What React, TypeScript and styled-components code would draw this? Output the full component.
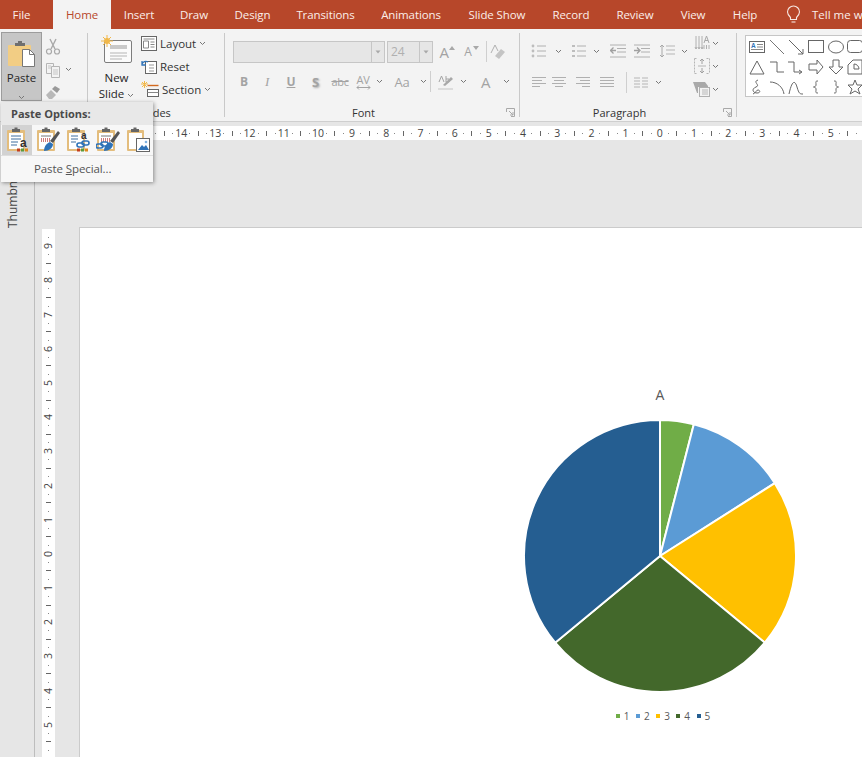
import styled, { createGlobalStyle } from "styled-components";
import { ReactNode } from "react";

const GlobalStyle = createGlobalStyle`
    html, body {
        margin: 0;
        height: 100%;
        overflow: hidden;
        background: #e6e6e6;
    }
    * {
        box-sizing: border-box;
    }
`;

const UI_FONT = `"Open Sans", "Noto Sans", "Liberation Sans", sans-serif`;
const GREY = "#8c8c8c";

const Page = styled.div`
    position: relative;
    width: 862px;
    height: 757px;
    overflow: hidden;
    display: flex;
    flex-direction: column;
    font-family: ${UI_FONT};
    font-size: 11.5px;
    color: #333;
`;

const TabBar = styled.div`
    display: flex;
    align-items: stretch;
    height: 29px;
    background: #b7472a;
    flex: none;
    overflow: hidden;
`;

const Tab = styled.div<{ $w: number; $active?: boolean }>`
    width: ${(p) => p.$w}px;
    flex: none;
    display: flex;
    align-items: center;
    justify-content: center;
    letter-spacing: -0.1px;
    background: ${(p) => (p.$active ? "#f3f3f3" : "transparent")};
    color: ${(p) => (p.$active ? "#b7472a" : "#fbeee9")};
`;

const TellMe = styled.div`
    display: flex;
    flex: none;
    align-items: center;
    gap: 11px;
    margin-left: 15px;
    color: #fbeee9;
    white-space: nowrap;
`;

const Ribbon = styled.div`
    display: flex;
    height: 93px;
    flex: none;
    background: #f3f3f3;
    border-bottom: 1px solid #cfcfcf;
    overflow: hidden;
`;

const Group = styled.div<{ $w: number; $line?: boolean }>`
    width: ${(p) => p.$w}px;
    flex: none;
    display: flex;
    flex-direction: column;
    margin: 4px 0;
    border-right: ${(p) => (p.$line ? "1px solid #c9c9c9" : "none")};
`;

const GroupBody = styled.div`
    flex: 1;
    display: flex;
    min-height: 0;
`;

const GroupFooter = styled.div<{ $flush?: boolean }>`
    height: 17px;
    margin-bottom: -4px;
    padding-right: ${(p) => (p.$flush ? 0 : 17)}px;
    display: grid;
    grid-template-columns: 1fr auto 1fr;
    align-items: center;
    color: #333;
    font-size: 11px;
`;

const FooterLabel = styled.span`
    grid-column: 2;
`;

const Launcher = styled.svg`
    grid-column: 3;
    justify-self: end;
    margin-right: -13px;
    width: 9px;
    height: 9px;
`;

const PasteButton = styled.div`
    width: 41px;
    height: 69px;
    margin: -1px 0 0 1px;
    background: #c6c6c6;
    border: 1px solid #9c9c9c;
    display: flex;
    flex-direction: column;
    align-items: center;
    padding-top: 7px;
    color: #262626;
    line-height: 14px;
`;

const PasteLine = styled.span`
    margin-top: 4px;
`;

const SmallColumn = styled.div`
    display: flex;
    flex-direction: column;
    gap: 6px;
    padding: 5px 0 0 3px;
`;

const SmallRow = styled.div`
    display: flex;
    align-items: center;
    gap: 4px;
    height: 17px;
`;

const BigButton = styled.div`
    width: 49px;
    margin-left: 4px;
    display: flex;
    flex-direction: column;
    align-items: center;
    line-height: 16px;
    padding-top: 2px;
    color: #262626;
`;

const BigLabel = styled.span`
    margin-top: 6px;
`;

const SlideActions = styled.div`
    display: flex;
    flex-direction: column;
    gap: 6px;
    padding-top: 2px;
`;

const SlideAction = styled.div`
    display: flex;
    align-items: center;
    gap: 3px;
    height: 17px;
    color: #333;
`;

const Chevron = () => (
    <svg width="7" height="5" viewBox="0 0 7 5" style={{ flex: "none" }}>
        <path d="M1 1l2.5 2.5L6 1" fill="none" stroke="#777" strokeWidth="1" />
    </svg>
);

const FontColumn = styled.div`
    display: flex;
    flex-direction: column;
    padding: 8px 0 0 8px;
    gap: 9px;
`;

const FontRow = styled.div`
    display: flex;
    align-items: center;
    height: 21px;
`;

const Combo = styled.div<{ $w: number }>`
    width: ${(p) => p.$w}px;
    height: 22px;
    margin-right: 2px;
    display: flex;
    align-items: center;
    justify-content: flex-end;
    background: #e6e6e6;
    border: 1px solid #c6c6c6;
    color: #b0b0b0;
`;

const ComboValue = styled.span`
    flex: 1;
    padding-left: 3px;
    font-size: 12px;
`;

const ComboArrow = styled.div`
    width: 13px;
    height: 100%;
    border-left: 1px solid #c6c6c6;
    display: flex;
    align-items: center;
    justify-content: center;
`;

const Caret = () => (
    <svg width="6" height="4" viewBox="0 0 6 4">
        <path d="M0.5 0.5h5L3 3.5z" fill="#a8a8a8" />
    </svg>
);

const Glyph = styled.div<{ $w: number; $size?: number; $bold?: boolean; $italic?: boolean; $under?: boolean; $shadow?: boolean }>`
    width: ${(p) => p.$w}px;
    flex: none;
    text-align: center;
    color: #a3a3a3;
    font-size: ${(p) => p.$size ?? 12}px;
    line-height: 18px;
    font-family: ${(p) => (p.$italic ? `"Liberation Serif", serif` : UI_FONT)};
    font-weight: ${(p) => (p.$bold ? 700 : 400)};
    font-style: ${(p) => (p.$italic ? "italic" : "normal")};
    text-decoration: ${(p) => (p.$under ? "underline" : "none")};
    text-shadow: ${(p) => (p.$shadow ? "1px 1px 2px #aaa" : "none")};
    letter-spacing: -0.3px;
`;

const SpacingGlyph = styled(Glyph)`
    display: flex;
    flex-direction: column;
    align-items: center;
    line-height: 11px;
`;

const Cell = styled.div<{ $w: number }>`
    width: ${(p) => p.$w}px;
    flex: none;
    display: flex;
    align-items: center;
    justify-content: center;
`;

const VLine = styled.div<{ $mx: number }>`
    width: 1px;
    height: 21px;
    margin: 0 ${(p) => p.$mx}px;
    flex: none;
    background: #cfcfcf;
`;

const ParaLeft = styled.div`
    width: 172px;
    flex: none;
    display: flex;
    flex-direction: column;
    gap: 13px;
    padding: 9px 0 0 11px;
`;

const ParaRight = styled.div`
    display: flex;
    flex-direction: column;
    gap: 5px;
    padding-top: 1px;
`;

const ParaRow = styled.div`
    display: flex;
    align-items: center;
    height: 18px;
`;

const ShapesBox = styled.div`
    margin: 2px 0 0 8px;
    width: 130px;
    height: 62px;
    padding: 1px 0 0 1px;
    background: #fff;
    border: 1px solid #c6c6c6;
    display: grid;
    grid-template-columns: repeat(6, 19.7px);
    grid-auto-rows: 20px;
    align-items: center;
    justify-items: center;
`;

const Workspace = styled.div`
    flex: 1;
    display: flex;
    min-height: 0;
`;

const ThumbPane = styled.div`
    width: 35px;
    flex: none;
    border-right: 1px solid #bdbdbd;
    padding: 44px 0 0 5px;
`;

const ThumbLabel = styled.div`
    writing-mode: vertical-rl;
    transform: rotate(180deg);
    height: 62px;
    white-space: nowrap;
    font-size: 12px;
    line-height: 16px;
    color: #444;
`;

const EditArea = styled.div`
    flex: 1;
    min-width: 0;
    display: flex;
    flex-direction: column;
`;

const HRuler = styled.div`
    height: 14px;
    margin: 4px 0 0 45px;
    padding-left: 62.7px;
    background: #fff;
    display: flex;
    align-items: center;
    overflow: hidden;
    flex: none;
`;

const RulerCell = styled.div`
    width: 8.55px;
    height: 14px;
    flex: none;
    display: flex;
    align-items: center;
    justify-content: center;
    font-size: 10.5px;
    color: #444;
`;

const RulerUnit = styled.div`
    display: contents;
`;

const VRulerStrip = styled.div`
    width: 13px;
    flex: none;
    margin-top: 2px;
    padding-top: 4.4px;
    background: #fff;
    display: flex;
    flex-direction: column;
    align-items: center;
    height: 529px;
    overflow: hidden;
`;

const VRulerCell = styled.div`
    width: 13px;
    height: 8.55px;
    flex: none;
    display: flex;
    align-items: center;
    justify-content: center;
    font-size: 10.5px;
    color: #444;
`;

const VNumber = styled.span`
    display: block;
    transform: rotate(-90deg);
`;

const Dot = styled.span`
    width: 1px;
    height: 1px;
    background: #888;
`;

const HTick = styled.span`
    width: 1px;
    height: 5px;
    background: #666;
`;

const VTick = styled.span`
    width: 5px;
    height: 1px;
    background: #666;
`;

const CanvasRow = styled.div`
    flex: 1;
    display: flex;
    gap: 24px;
    padding: 87px 0 0 7px;
    min-height: 0;
`;

const Slide = styled.div`
    flex: 1;
    height: 600px;
    background: #fff;
    border: 1px solid #cbcbcb;
    border-right: none;
    padding: 159px 0 0 430px;
`;

const ChartBlock = styled.div`
    width: 300px;
    display: flex;
    flex-direction: column;
    align-items: center;
`;

const ChartTitle = styled.div`
    font-size: 14px;
    line-height: 16px;
    color: #595959;
    margin-bottom: 15px;
`;

const Legend = styled.div`
    display: flex;
    gap: 6.5px;
    margin: 16px 0 0 6px;
    font-size: 10px;
    line-height: 12px;
    color: #595959;
`;

const LegendItem = styled.div`
    display: flex;
    align-items: center;
    gap: 4px;
`;

const Swatch = styled.span<{ $c: string }>`
    width: 4px;
    height: 4px;
    background: ${(p) => p.$c};
`;

const PastePopup = styled.div`
    position: absolute;
    left: 1px;
    top: 102px;
    width: 152px;
    height: 80px;
    background: #f7f7f7;
    box-shadow: 1px 1px 4px rgba(0, 0, 0, 0.4);
    display: flex;
    flex-direction: column;
`;

const PopupHeader = styled.div`
    height: 23px;
    background: #e8e8e8;
    padding: 4px 0 0 10px;
    font-weight: 700;
    font-size: 11px;
    color: #4a4a4a;
`;

const PopupIcons = styled.div`
    height: 31px;
    display: flex;
    padding-left: 1px;
    border-bottom: 1px solid #dedede;
`;

const PopupIcon = styled.div<{ $on?: boolean }>`
    width: 30px;
    height: 30px;
    display: flex;
    align-items: center;
    justify-content: center;
    padding-left: 2px;
    background: ${(p) => (p.$on ? "#d2d2d2" : "transparent")};
`;

const PopupLink = styled.div`
    flex: 1;
    display: flex;
    align-items: center;
    padding: 0 0 2px 33px;
    color: #555;
    letter-spacing: -0.1px;
`;

/* ---------- ribbon drawings ---------- */

const Svg = ({ w, h, children }: { w: number; h: number; children: ReactNode }) => (
    <svg width={w} height={h} viewBox={`0 0 ${w} ${h}`} fill="none" stroke={GREY} strokeWidth="1" style={{ flex: "none", display: "block" }}>
        {children}
    </svg>
);

const PasteIcon = () => (
    <Svg w={29} h={27}>
        <rect x="1" y="5" width="23" height="21" rx="1" fill="#f2cd84" stroke="none" />
        <path d="M8 5V3h3V1h4v2h3v3H8z" fill="#6f6f6f" stroke="none" />
        <path d="M15.5 9.5h7l5 5v12h-12z" fill="#fff" stroke="#777" />
        <path d="M22.5 9.5v5h5" stroke="#777" />
    </Svg>
);

const CutIcon = () => (
    <Svg w={16} h={17}>
        <path d="M5 1l5 10M11 1L6 11" stroke="#a8a8a8" strokeWidth="1.4" />
        <circle cx="4" cy="13.5" r="2.5" stroke="#a8a8a8" strokeWidth="1.2" />
        <circle cx="12" cy="13.5" r="2.5" stroke="#a8a8a8" strokeWidth="1.2" />
    </Svg>
);

const CopyIcon = () => (
    <Svg w={16} h={16}>
        <path d="M1.5 1.5h7v10h-7z" stroke="#b5b5b5" />
        <path d="M6.5 4.5h8v11h-8z" fill="#f3f3f3" stroke="#b5b5b5" />
        <path d="M8 8h5M8 10h5M8 12h5M3 4h3M3 6h3" stroke="#c5c5c5" />
    </Svg>
);

const PainterIcon = () => (
    <Svg w={16} h={15}>
        <path d="M1 10l5-5 5 5-4 4H4z" fill="#b8b8b8" stroke="none" />
        <path d="M7 4l3-3 5 3-3 4z" fill="#9a9a9a" stroke="none" />
    </Svg>
);

const NewSlideIcon = () => (
    <Svg w={31} h={29}>
        <rect x="3.5" y="5.5" width="27" height="22" rx="1.5" fill="#fbfbfb" stroke="#7d7d7d" />
        <path d="M9 10h17v4H9z" fill="#c9c9c9" stroke="none" />
        <path d="M9 18h17M9 21h17M9 24h12" stroke="#b5b5b5" />
        <circle cx="6" cy="6" r="3" fill="#f1b84a" stroke="none" />
        <path d="M6 0v12M0 6h12M2 2l8 8M10 2l-8 8" stroke="#f1b84a" />
    </Svg>
);

const LayoutIcon = () => (
    <Svg w={16} h={15}>
        <rect x="0.5" y="0.5" width="15" height="14" fill="#fff" stroke="#666" />
        <path d="M2.5 3h11M2.5 5v7h5V5zM9.5 6h4M9.5 8.5h4M9.5 11h4" stroke="#888" />
    </Svg>
);

const ResetIcon = () => (
    <Svg w={16} h={15}>
        <rect x="4.5" y="2.5" width="11" height="12" fill="#fff" stroke="#666" />
        <path d="M8 6h5M8 9h5M8 12h5" stroke="#999" />
        <path d="M1 5a4 4 0 0 1 6-2M1 2v4h4" stroke="#2f73b8" strokeWidth="1.3" />
    </Svg>
);

const SectionIcon = () => (
    <Svg w={18} h={17}>
        <path d="M0 3h7M3.5 0v7M1 1l5 5M6 1L1 6" stroke="#f1b84a" />
        <path d="M6.5 4.5h11" stroke="#d2691e" strokeWidth="1.4" />
        <rect x="6.5" y="8.5" width="11" height="7" fill="#fff" stroke="#666" />
        <path d="M6.5 11.5h11" stroke="#888" />
    </Svg>
);

const GrowA = ({ down }: { down?: boolean }) => (
    <Cell $w={24}>
        <Glyph $w={10} $size={down ? 12 : 15}>A</Glyph>
        <svg width="6" height="4" viewBox="0 0 6 4" style={{ marginTop: -8 }}>
            <path d={down ? "M0 0h6L3 4z" : "M3 0l3 4H0z"} fill="#a8a8a8" />
        </svg>
    </Cell>
);

const ClearIcon = () => (
    <Svg w={16} h={16}>
        <path d="M1 9L5 1l3 6" stroke="#b0b0b0" />
        <path d="M5 12l6-7 4 3-6 7z" fill="#c4c4c4" stroke="none" />
    </Svg>
);

const HighlightIcon = () => (
    <Svg w={16} h={16}>
        <path d="M1 8l2.5-6L6 8" stroke="#a3a3a3" />
        <path d="M8 2v6h3a2 2 0 0 0 0-3H8" stroke="#a3a3a3" />
        <path d="M5 11l8-8 2 2-8 7z" fill="#a8a8a8" stroke="none" />
        <path d="M0 14h15v2H0z" fill="#dcdcdc" stroke="none" />
    </Svg>
);

const Lines = ({ rows }: { rows: [number, number][] }) => (
    <Svg w={15} h={12}>
        {rows.map(([x, w], i) => (
            <path key={i} d={`M${x} ${i * 3 + 1.5}h${w}`} stroke="#b0b0b0" />
        ))}
    </Svg>
);

const BulletIcon = ({ numbered }: { numbered?: boolean }) => (
    <Svg w={15} h={15}>
        {[2, 7, 12].map((y) => (
            <g key={y}>
                {numbered ? <path d={`M1 ${y - 1}h3v2H1z`} fill="#bdbdbd" stroke="none" /> : <circle cx="2" cy={y} r="1.4" fill="#bdbdbd" stroke="none" />}
                <path d={`M6 ${y}h9`} stroke="#b0b0b0" />
            </g>
        ))}
    </Svg>
);

const IndentIcon = ({ out }: { out?: boolean }) => (
    <Svg w={16} h={14}>
        <path d="M0 1h16M7 4.5h9M7 8h9M0 13h16" stroke="#b0b0b0" />
        <path d={out ? "M6 6.5H1M3.5 3.5l-3 3 3 3" : "M0 6.5h5M3 3.5l3 3-3 3"} stroke="#a0a0a0" strokeWidth="1.3" />
    </Svg>
);

const SpacingIcon = () => (
    <Svg w={16} h={16}>
        <path d="M3 2v12M1 4l2-2 2 2M1 12l2 2 2-2" stroke="#a8a8a8" />
        <path d="M7 3h9M7 7h9M7 11h9" stroke="#b5b5b5" />
    </Svg>
);

const DirectionIcon = () => (
    <Svg w={16} h={16}>
        <path d="M2 1v13M5 1v13M8 1v13M1 12l1 2 1-2M4 12l1 2 1-2M7 12l1 2 1-2" stroke="#b0b0b0" />
        <path d="M10 8l2.5-7L15 8M11 5.5h3" stroke="#a8a8a8" />
        <path d="M10 10v4M12.5 10v4M15 10v4" stroke="#b0b0b0" />
    </Svg>
);

const AlignTextIcon = () => (
    <Svg w={16} h={16}>
        <path d="M0.5 0.5h3M12.5 0.5h3M0.5 0.5v15M15.5 0.5v15M0.5 15.5h3M12.5 15.5h3" stroke="#b5b5b5" strokeDasharray="2 1" />
        <path d="M8 1v5M6 3l2-2 2 2M8 15v-5M6 13l2 2 2-2" stroke="#a0a0a0" />
        <path d="M4 8h8" stroke="#b5b5b5" />
    </Svg>
);

const SmartArtIcon = () => (
    <Svg w={17} h={16}>
        <path d="M0 1h12l3 4v1H5v6H4z" fill="#a9a9a9" stroke="none" />
        <rect x="6.5" y="6.5" width="10" height="9" fill="#f3f3f3" stroke="#b0b0b0" />
        <path d="M9 9h6M9 11h6M9 13h6" stroke="#b8b8b8" />
    </Svg>
);

const ColumnsIcon = () => (
    <Svg w={14} h={11}>
        <path d="M0 1h6M8 1h6M0 4h6M8 4h6M0 7h6M8 7h6M0 10h6M8 10h6" stroke="#b5b5b5" />
    </Svg>
);

const LauncherIcon = () => (
    <Launcher viewBox="0 0 9 9" fill="none" stroke="#a8a8a8">
        <path d="M0.5 4V0.5h8v8H5M3 3l4 4M7 4v3H4" />
    </Launcher>
);

const shapes: ReactNode[] = [
    <g key="tb">
        <rect x="0.5" y="2.5" width="15" height="11" fill="#fff" stroke="#666" />
        <path d="M8 5.5h6M8 8h6M2 10.5h12" stroke="#888" />
        <text x="2" y="9" fontSize="6.5" fill="#2f73b8" stroke="none" fontFamily="Liberation Sans, sans-serif" fontWeight="700">A</text>
    </g>,
    <path key="l" d="M1 1l14 14" stroke="#777" />,
    <path key="a" d="M1 1l14 14M15 10v5h-5" stroke="#666" />,
    <rect key="r" x="0.5" y="1.5" width="15" height="12" stroke="#666" />,
    <ellipse key="o" cx="8" cy="8" rx="7.5" ry="6" stroke="#666" />,
    <rect key="rr" x="0.5" y="1.5" width="15" height="12" rx="3" stroke="#666" />,
    <path key="t" d="M8 2l7 13H1z" stroke="#666" />,
    <path key="c1" d="M1 3h7v10h7" stroke="#666" />,
    <path key="c2" d="M0 3h6v10h7M11 11l3 2-3 2" stroke="#666" />,
    <path key="ra" d="M1 5h8V1l6 7-6 7v-4H1z" stroke="#666" />,
    <path key="da" d="M5 1h6v7h4l-7 7-7-7h4z" stroke="#666" />,
    <path key="sn" d="M1 15V6l5-5h9v14z M7 5a5 5 0 0 1 5 5H7z" stroke="#666" />,
    <path key="fr" d="M9 1C3 3 12 6 7 8s-3 6 1 6 3-3 1-3-2 3-5 4" stroke="#666" />,
    <path key="arc" d="M1 3c7 0 13 5 14 12" stroke="#666" />,
    <path key="cv" d="M1 15C4 1 7 1 9 8s3 7 6 7" stroke="#666" />,
    <path key="bl" d="M10 2C7 2 8 3 8 5v1C8 7 7 8 5.500 8 7 8 8 9 8 10v1c0 2-1 3 2 3" stroke="#666" />,
    <path key="br" d="M6 2c3 0 2 1 2 3v1c0 1 1 2 2.500 2C9 8 8 9 8 10v1c0 2 1 3-2 3" stroke="#666" />,
    <path key="st" d="M8 1l2 5h5l-4 4 2 5-5-3-5 3 2-5-4-4h5z" stroke="#666" />,
];

/* ---------- paste option drawings ---------- */

const Clipboard = ({ children }: { children: ReactNode }) => (
    <svg width="25" height="26" viewBox="0 0 25 26" fill="none" style={{ display: "block" }}>
        <rect x="1" y="3" width="18" height="21" rx="1" fill="#e3bd7d" />
        <rect x="3" y="6" width="14" height="16" fill="#fff" />
        <path d="M6 5V2h2.500V0.500h3V2H14v3z" fill="#666" />
        {children}
    </svg>
);

const TextLines = () => <path d="M5 9h10M5 12h10M5 15h7M5 18h6" stroke="#3f6f9f" />;
const SmallA = () => (
    <text x="14" y="20" fontSize="12" fontWeight="700" fill="#333" fontFamily="Liberation Sans, sans-serif">a</text>
);
const Dots = () => (
    <g>
        <rect x="11" y="21.500" width="3" height="3" fill="#c43e1c" />
        <rect x="15" y="21.500" width="3" height="3" fill="#5a9a3c" />
        <rect x="19" y="21.500" width="3" height="3" fill="#e08a1e" />
    </g>
);
const Hatch = () => (
    <g>
        <path d="M5 9h10" stroke="#777" />
        <path d="M5 12h10M5 14h10" stroke="#c0504d" strokeDasharray="1 1" strokeWidth="1.500" />
    </g>
);
const Brush = () => (
    <g>
        <path d="M14 14l8-10 2 2-7 10z" fill="#555" />
        <path d="M8 24c0-5 3-8 6-9l3 2c0 4-4 7-9 7z" fill="#2f73b8" />
    </g>
);
const Link = ({ x, y }: { x: number; y: number }) => (
    <g transform={`translate(${x} ${y})`} stroke="#2f73b8" strokeWidth="1.600">
        <rect x="0" y="2" width="7" height="4" rx="2" />
        <rect x="5" y="0" width="7" height="4" rx="2" />
    </g>
);

const PasteOptionIcons: ReactNode[] = [
    <Clipboard key="1"><TextLines /><SmallA /><Dots /></Clipboard>,
    <Clipboard key="2"><Hatch /><Brush /></Clipboard>,
    <Clipboard key="3"><path d="M5 9h7M5 12h7M5 15h5" stroke="#3f6f9f" /><text x="15" y="12" fontSize="10" fontWeight="700" fill="#333" fontFamily="Liberation Sans, sans-serif">a</text><Link x={11} y={14} /><Dots /></Clipboard>,
    <Clipboard key="4"><Hatch /><Brush /><Link x={0} y={15} /></Clipboard>,
    <svg key="5" width="25" height="26" viewBox="0 0 25 26" fill="none" style={{ display: "block" }}>
        <rect x="1" y="3" width="17" height="21" rx="1" fill="#e3bd7d" />
        <rect x="3" y="6" width="13" height="16" fill="#fff" />
        <path d="M5 5V2h2.500V0.500h3V2H13v3z" fill="#666" />
        <rect x="10.500" y="11.500" width="13" height="13" fill="#fff" stroke="#666" />
        <path d="M12 23l4-5 2 2 2-2 3 5z" fill="#2f73b8" />
        <circle cx="20" cy="15" r="1.300" fill="#7fb2e0" />
    </svg>,
];

/* ---------- chart ---------- */

const pieData = [
    { label: "1", value: 1, color: "#70ad47" },
    { label: "2", value: 3, color: "#5b9bd5" },
    { label: "3", value: 5, color: "#ffc000" },
    { label: "4", value: 7, color: "#43682b" },
    { label: "5", value: 9, color: "#255e91" },
];

function PieChart() {
    const total = pieData.reduce((sum, d) => sum + d.value, 0);
    const r = 136;
    const c = 138;
    let acc = 0;
    const point = (v: number) => {
        const a = (v / total) * Math.PI * 2;
        return `${c + r * Math.sin(a)} ${c - r * Math.cos(a)}`;
    };
    return (
        <svg width="276" height="276" viewBox="0 0 276 276" style={{ display: "block" }}>
            {pieData.map((d) => {
                const from = acc;
                acc += d.value;
                const large = d.value / total > 0.5 ? 1 : 0;
                return (
                    <path
                        key={d.label}
                        d={`M${c} ${c}L${point(from)}A${r} ${r} 0 ${large} 1 ${point(acc)}Z`}
                        fill={d.color}
                        stroke="#fff"
                        strokeWidth="2"
                    />
                );
            })}
        </svg>
    );
}

/* ---------- rulers ---------- */

const hNumbers = [15, 14, 13, 12, 11, 10, 9, 8, 7, 6, 5, 4, 3, 2, 1, 0, 1, 2, 3, 4, 5];
const vNumbers = [9, 8, 7, 6, 5, 4, 3, 2, 1, 0, 1, 2, 3, 4, 5];

function HorizontalRuler() {
    return (
        <HRuler>
            {hNumbers.map((n, i) => (
                <RulerUnit key={i}>
                    <RulerCell>{n}</RulerCell>
                    <RulerCell><Dot /></RulerCell>
                    <RulerCell><HTick /></RulerCell>
                    <RulerCell><Dot /></RulerCell>
                </RulerUnit>
            ))}
        </HRuler>
    );
}

function VerticalRuler() {
    return (
        <VRulerStrip>
            <VRulerCell><Dot /></VRulerCell>
            {vNumbers.map((n, i) => (
                <RulerUnit key={i}>
                    <VRulerCell><VNumber>{n}</VNumber></VRulerCell>
                    <VRulerCell><Dot /></VRulerCell>
                    <VRulerCell><VTick /></VRulerCell>
                    <VRulerCell><Dot /></VRulerCell>
                </RulerUnit>
            ))}
        </VRulerStrip>
    );
}

const tabs = [
    { name: "Insert", w: 56 },
    { name: "Draw", w: 54 },
    { name: "Design", w: 63 },
    { name: "Transitions", w: 83 },
    { name: "Animations", w: 88 },
    { name: "Slide Show", w: 84 },
    { name: "Record", w: 64 },
    { name: "Review", w: 64 },
    { name: "View", w: 52 },
    { name: "Help", w: 52 },
];

export default function App() {
    return (
        <Page>
            <GlobalStyle />
            <TabBar>
                <Tab $w={43}>File</Tab>
                <Tab $w={10} />
                <Tab $w={58} $active>Home</Tab>
                {tabs.map((t) => (
                    <Tab key={t.name} $w={t.w}>{t.name}</Tab>
                ))}
                <TellMe>
                    <svg width="15" height="19" viewBox="0 0 15 19" fill="none" stroke="#f7e6e1" strokeWidth="1.1">
                        <path d="M4.500 12.500C3 11 1.500 9.500 1.500 7a6 6 0 0 1 12 0c0 2.500-1.500 4-3 5.500v2h-6z" />
                        <path d="M5.500 17h4" />
                    </svg>
                    <span>Tell me what you want to do</span>
                </TellMe>
            </TabBar>

            <Ribbon>
                <Group $w={88} $line>
                    <GroupBody>
                        <PasteButton>
                            <PasteIcon />
                            <PasteLine>Paste</PasteLine>
                            <PasteLine><Chevron /></PasteLine>
                        </PasteButton>
                        <SmallColumn>
                            <SmallRow><CutIcon /></SmallRow>
                            <SmallRow><CopyIcon /><Chevron /></SmallRow>
                            <SmallRow><PainterIcon /></SmallRow>
                        </SmallColumn>
                    </GroupBody>
                    <GroupFooter />
                </Group>

                <Group $w={137} $line>
                    <GroupBody>
                        <BigButton>
                            <NewSlideIcon />
                            <BigLabel>New</BigLabel>
                            <span>Slide <Chevron /></span>
                        </BigButton>
                        <SlideActions>
                            <SlideAction><LayoutIcon /> Layout <Chevron /></SlideAction>
                            <SlideAction><ResetIcon /> Reset</SlideAction>
                            <SlideAction><SectionIcon /> Section <Chevron /></SlideAction>
                        </SlideActions>
                    </GroupBody>
                    <GroupFooter $flush>
                        <FooterLabel>Slides</FooterLabel>
                    </GroupFooter>
                </Group>

                <Group $w={295} $line>
                    <GroupBody>
                        <FontColumn>
                            <FontRow>
                                <Combo $w={152}><ComboArrow><Caret /></ComboArrow></Combo>
                                <Combo $w={46}><ComboValue>24</ComboValue><ComboArrow><Caret /></ComboArrow></Combo>
                                <GrowA />
                                <GrowA down />
                                <VLine $mx={3} />
                                <Cell $w={16}><ClearIcon /></Cell>
                            </FontRow>
                            <FontRow>
                                <Glyph $w={22} $bold>B</Glyph>
                                <Glyph $w={24} $italic $size={13}>I</Glyph>
                                <Glyph $w={24} $under $bold>U</Glyph>
                                <Glyph $w={25} $bold $size={13} $shadow>S</Glyph>
                                <Glyph $w={24} $size={11}><s>abc</s></Glyph>
                                <SpacingGlyph $w={22} $size={11}>
                                    AV
                                    <svg width="15" height="5" viewBox="0 0 15 5" fill="none" stroke="#a3a3a3">
                                        <path d="M1 2.500h13M3 0.500l-2 2 2 2M12 0.500l2 2-2 2" />
                                    </svg>
                                </SpacingGlyph>
                                <Cell $w={10}><Chevron /></Cell>
                                <Glyph $w={36} $size={13}>Aa</Glyph>
                                <Cell $w={6}><Chevron /></Cell>
                                <VLine $mx={4} />
                                <Cell $w={22}><HighlightIcon /></Cell>
                                <Cell $w={12}><Chevron /></Cell>
                                <Glyph $w={33} $size={15}>A</Glyph>
                                <Cell $w={8}><Chevron /></Cell>
                            </FontRow>
                        </FontColumn>
                    </GroupBody>
                    <GroupFooter>
                        <FooterLabel>Font</FooterLabel>
                        <LauncherIcon />
                    </GroupFooter>
                </Group>

                <Group $w={217} $line>
                    <GroupBody>
                        <ParaLeft>
                            <ParaRow>
                                <Cell $w={15}><BulletIcon /></Cell>
                                <Cell $w={24}><Chevron /></Cell>
                                <Cell $w={16}><BulletIcon numbered /></Cell>
                                <Cell $w={20}><Chevron /></Cell>
                                <Cell $w={24}><IndentIcon out /></Cell>
                                <Cell $w={24}><IndentIcon /></Cell>
                                <Cell $w={26}><SpacingIcon /></Cell>
                                <Cell $w={8}><Chevron /></Cell>
                            </ParaRow>
                            <ParaRow>
                                <Cell $w={16}><Lines rows={[[0, 14], [0, 10], [0, 14], [0, 8]]} /></Cell>
                                <Cell $w={24}><Lines rows={[[0, 14], [2, 10], [0, 14], [3, 8]]} /></Cell>
                                <Cell $w={24}><Lines rows={[[0, 14], [4, 10], [0, 14], [6, 8]]} /></Cell>
                                <Cell $w={24}><Lines rows={[[0, 14], [0, 14], [0, 14], [0, 14]]} /></Cell>
                                <VLine $mx={7} />
                                <Cell $w={14}><ColumnsIcon /></Cell>
                                <Cell $w={20}><Chevron /></Cell>
                            </ParaRow>
                        </ParaLeft>
                        <ParaRight>
                            <ParaRow><Cell $w={19}><DirectionIcon /></Cell><Cell $w={9}><Chevron /></Cell></ParaRow>
                            <ParaRow><Cell $w={19}><AlignTextIcon /></Cell><Cell $w={9}><Chevron /></Cell></ParaRow>
                            <ParaRow><Cell $w={19}><SmartArtIcon /></Cell><Cell $w={9}><Chevron /></Cell></ParaRow>
                        </ParaRight>
                    </GroupBody>
                    <GroupFooter>
                        <FooterLabel>Paragraph</FooterLabel>
                        <LauncherIcon />
                    </GroupFooter>
                </Group>

                <Group $w={126}>
                    <ShapesBox>
                        {shapes.map((s, i) => (
                            <svg key={i} width="16" height="16" viewBox="0 0 16 16" fill="none" style={{ display: "block" }}>{s}</svg>
                        ))}
                    </ShapesBox>
                </Group>
            </Ribbon>

            <Workspace>
                <ThumbPane>
                    <ThumbLabel>Thumbnails</ThumbLabel>
                </ThumbPane>
                <EditArea>
                    <HorizontalRuler />
                    <CanvasRow>
                        <VerticalRuler />
                        <Slide>
                            <ChartBlock>
                                <ChartTitle>A</ChartTitle>
                                <PieChart />
                                <Legend>
                                    {pieData.map((d) => (
                                        <LegendItem key={d.label}>
                                            <Swatch $c={d.color} />
                                            {d.label}
                                        </LegendItem>
                                    ))}
                                </Legend>
                            </ChartBlock>
                        </Slide>
                    </CanvasRow>
                </EditArea>
            </Workspace>

            <PastePopup>
                <PopupHeader>Paste Options:</PopupHeader>
                <PopupIcons>
                    {PasteOptionIcons.map((icon, i) => (
                        <PopupIcon key={i} $on={i === 0}>{icon}</PopupIcon>
                    ))}
                </PopupIcons>
                <PopupLink><span>Paste <u>S</u>pecial...</span></PopupLink>
            </PastePopup>
        </Page>
    );
}
